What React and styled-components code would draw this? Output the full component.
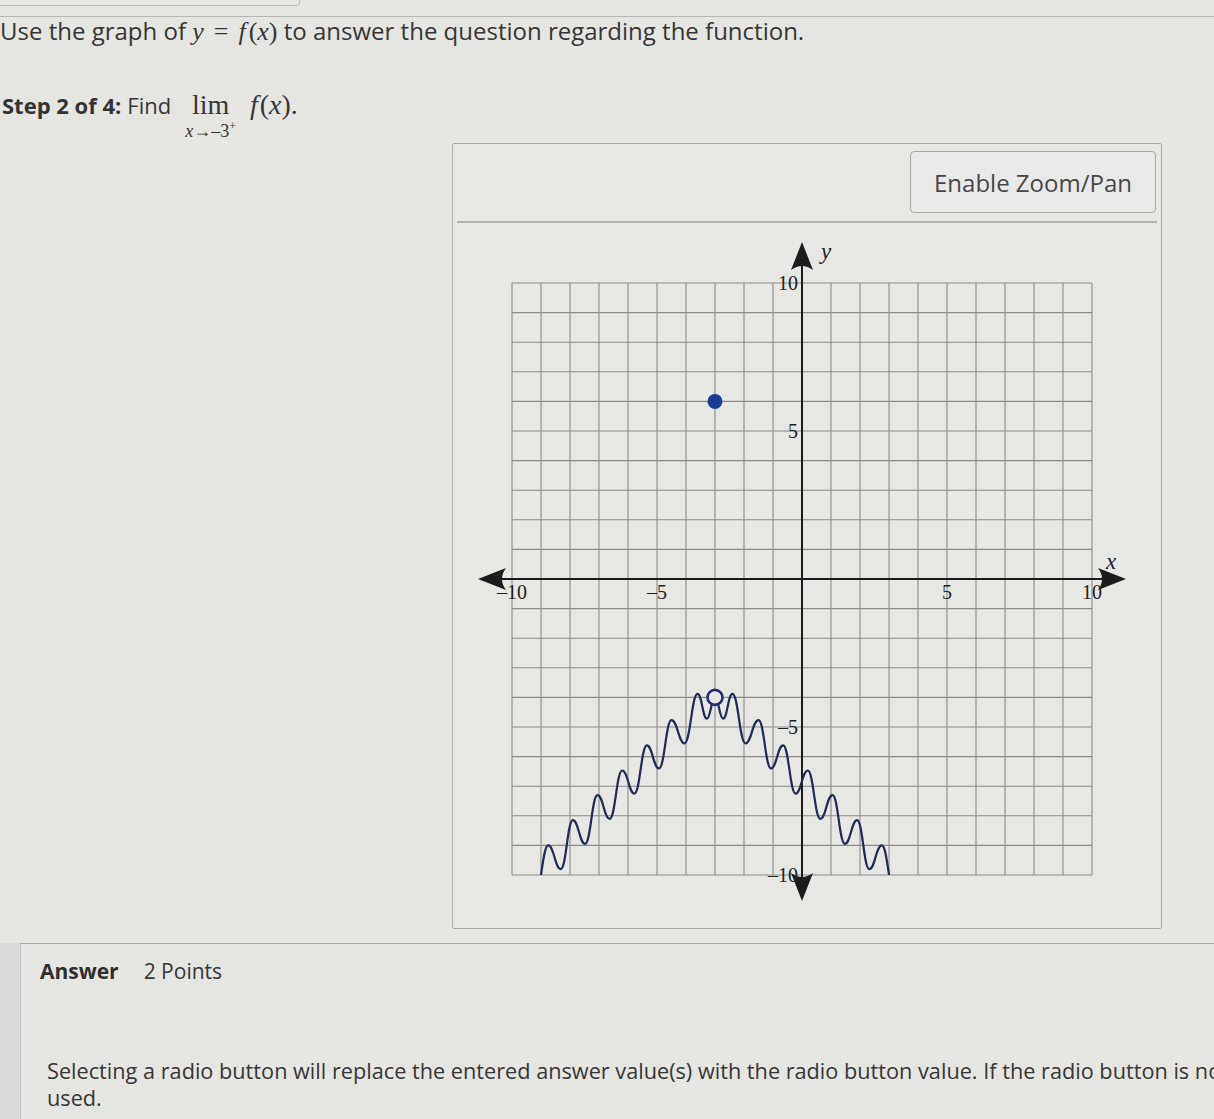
import React from 'react';
import styled, { createGlobalStyle } from 'styled-components';

const GlobalStyle = createGlobalStyle`
  html, body {
    margin: 0;
    padding: 0;
    background: #e5e5e2;
    overflow: hidden;
  }
  body {
    font-family: "Open Sans", "Liberation Sans", sans-serif;
    color: #363636;
  }
`;

const Page = styled.div`
  width: 1214px;
  height: 1119px;
  overflow: hidden;
  background: #e5e5e2;
`;

const TopTab = styled.div`
  box-sizing: border-box;
  width: 300px;
  height: 6px;
  border-right: 1px solid #b9b9b6;
  border-bottom: 1px solid #b9b9b6;
  border-bottom-right-radius: 4px;
`;

const TopRule = styled.div`
  margin-top: 10px;
  height: 1px;
  background: #b5b5b2;
`;

const Title = styled.div`
  font-size: 24px;
  line-height: 28px;
  white-space: nowrap;
`;

const MathVar = styled.span`
  font-family: "Liberation Serif", "Times New Roman", serif;
  font-style: ${({ upright }) => (upright ? 'normal' : 'italic')};
  font-size: ${({ size }) => size || '26px'};
  margin: ${({ space }) => space || '0'};
`;

const StepLine = styled.div`
  display: flex;
  align-items: baseline;
  height: 53px;
  margin-top: 44px;
  padding-left: 2px;
  font-size: 22px;
  line-height: 30px;
`;

const StepLabel = styled.span`
  font-weight: 700;
  color: #333;
  margin-right: 6px;
`;

const Limit = styled.span`
  display: inline-flex;
  flex-direction: column;
  align-items: center;
  margin: 0 14px 0 14px;
`;

const LimWord = styled.span`
  font-family: "Liberation Serif", "Times New Roman", serif;
  font-size: 28px;
  line-height: 30px;
`;

const LimSub = styled.span`
  margin-top: 1px;
  font-family: "Liberation Serif", "Times New Roman", serif;
  font-size: 18px;
  line-height: 20px;
  white-space: nowrap;

  sup {
    font-size: 12px;
    vertical-align: 7px;
    line-height: 0;
  }
`;

const GraphPanel = styled.div`
  box-sizing: border-box;
  margin-left: 452px;
  width: 710px;
  height: 786px;
  border: 1px solid #a9a9a6;
  border-radius: 2px;
  background: #e7e7e4;
`;

const PanelToolbar = styled.div`
  display: flex;
  justify-content: flex-end;
  align-items: flex-start;
  height: 79px;
  margin: 0 4px;
  padding: 7px 1px 0 0;
  box-sizing: border-box;
  border-bottom: 2px solid #b3b3b0;
`;

const ZoomButton = styled.button`
  width: 246px;
  height: 62px;
  border: 1px solid #a6a6a3;
  border-radius: 4px;
  background: #e9e9e7;
  font-family: "Open Sans", "Liberation Sans", sans-serif;
  font-size: 24px;
  color: #474747;
  padding: 0;
`;

const GraphSvg = styled.svg`
  display: block;
`;

const AnswerSection = styled.div`
  margin-top: 14px;
  margin-left: 20px;
  height: 300px;
  padding-left: 19px;
  border-top: 1px solid #a9a9a6;
  border-left: 1px solid #c3c4c3;
  background: #e5e5e2;
  box-shadow: -20px 0 0 #d9dbdb;
`;

const AnswerHeader = styled.div`
  display: flex;
  gap: 25px;
  padding-top: 13px;
  font-size: 21px;
  line-height: 28px;
`;

const AnswerLabel = styled.span`
  font-weight: 700;
  color: #2f2f2f;
`;

const Notice = styled.p`
  margin: 72px 0 0 7px;
  font-size: 21.7px;
  line-height: 27px;
  white-space: nowrap;
`;

// graph geometry (page pixels)
const OX = 802;
const OY = 580;
const UX = 29;
const UY = 29.6;
const px = (u) => OX + UX * u;
const py = (v) => OY - UY * v;

const GRID = { left: px(-10), right: px(10), top: py(10), bottom: py(-10) };

// local extrema of the wave, by distance from x = -3
const extrema = [
  [0, -4], [0.28, -4.72], [0.6, -3.88], [1.05, -5.55], [1.5, -4.77],
  [1.93, -6.4], [2.35, -5.62], [2.78, -7.25], [3.2, -6.47], [3.63, -8.1],
  [4.05, -7.3], [4.48, -8.95], [4.9, -8.15], [5.32, -9.8], [5.75, -9.0],
  [6.2, -10.65],
];

const buildCurve = () => {
  const pts = [
    ...extrema.slice(1).reverse().map(([d, v]) => [-3 - d, v]),
    [-3, -4],
    ...extrema.slice(1).map(([d, v]) => [-3 + d, v]),
  ].map(([u, v]) => [px(u), py(v)]);
  let d = `M${pts[0][0].toFixed(1)} ${pts[0][1].toFixed(1)}`;
  for (let i = 1; i < pts.length; i++) {
    const [ax, ay] = pts[i - 1];
    const [bx, by] = pts[i];
    const k = (bx - ax) * 0.45;
    d += ` C${(ax + k).toFixed(1)} ${ay.toFixed(1)} ${(bx - k).toFixed(1)} ${by.toFixed(1)} ${bx.toFixed(1)} ${by.toFixed(1)}`;
  }
  return d;
};

const curvePath = buildCurve();
const ticks = Array.from({ length: 21 }, (_, i) => i - 10);

const Graph = () => (
  <GraphSvg width="708" height="703" viewBox="453 224 708 703">
    <defs>
      <clipPath id="gridClip">
        <rect x={GRID.left} y={GRID.top} width={GRID.right - GRID.left} height={GRID.bottom - GRID.top} />
      </clipPath>
    </defs>
    <g stroke="#8a8a88" strokeWidth="1.1">
      {ticks.map((t) => (
        <line key={`v${t}`} x1={px(t)} y1={GRID.top} x2={px(t)} y2={GRID.bottom} />
      ))}
      {ticks.map((t) => (
        <line key={`h${t}`} x1={GRID.left} y1={py(t)} x2={GRID.right} y2={py(t)} />
      ))}
    </g>

    {/* axes */}
    <g stroke="#1c1c1c" strokeWidth="2">
      <line x1={482} y1={OY} x2={1122} y2={OY} />
      <line x1={OX} y1={247} x2={OX} y2={898} />
    </g>
    <g fill="#1c1c1c">
      <path d={`M478 ${OY} L506 ${OY - 11} Q498 ${OY} 506 ${OY + 11} Z`} />
      <path d={`M1126 ${OY} L1098 ${OY - 11} Q1106 ${OY} 1098 ${OY + 11} Z`} />
      <path d={`M${OX} 243 L${OX - 11} 271 Q${OX} 263 ${OX + 11} 271 Z`} />
      <path d={`M${OX} 902 L${OX - 11} 874 Q${OX} 882 ${OX + 11} 874 Z`} />
    </g>

    <g fontFamily='"Liberation Serif", "Times New Roman", serif' fontSize="20" fill="#222">
      <text x="821" y="260" fontStyle="italic" fontSize="23">y</text>
      <text x="1106" y="570" fontStyle="italic" fontSize="23">x</text>
      <text x={OX - 4} y={py(10) + 7} textAnchor="end">10</text>
      <text x={OX - 4} y={py(5) + 7} textAnchor="end">5</text>
      <text x={OX - 4} y={py(-5) + 7} textAnchor="end">–5</text>
      <text x={OX - 4} y={py(-10) + 7} textAnchor="end">–10</text>
      <text x={px(-10)} y={OY + 20} textAnchor="middle">–10</text>
      <text x={px(-5)} y={OY + 20} textAnchor="middle">–5</text>
      <text x={px(5)} y={OY + 20} textAnchor="middle">5</text>
      <text x={px(10)} y={OY + 20} textAnchor="middle">10</text>
    </g>

    <path d={curvePath} fill="none" stroke="#1f2a55" strokeWidth="2.2" clipPath="url(#gridClip)" />
    <circle cx={px(-3)} cy={py(-4)} r="7.5" fill="#e7e7e4" stroke="#1f2f72" strokeWidth="2.6" />
    <circle cx={px(-3)} cy={py(6)} r="7.5" fill="#1d3c96" />
  </GraphSvg>
);

export default function App() {
  return (
    <Page>
      <GlobalStyle />
      <TopTab />
      <TopRule />
      <Title>
        Use the graph of <MathVar>y</MathVar>
        <MathVar upright space="0 10px">=</MathVar>
        <MathVar space="0 3px 0 0">f</MathVar>
        <MathVar upright>(</MathVar><MathVar>x</MathVar><MathVar upright>)</MathVar> to answer the question regarding the function.
      </Title>
      <StepLine>
        <StepLabel>Step 2 of 4:</StepLabel>
        <span>Find</span>
        <Limit>
          <LimWord>lim</LimWord>
          <LimSub>
            <i>x</i>→–3<sup>+</sup>
          </LimSub>
        </Limit>
        <MathVar size="28px" space="0 2px 0 0">f</MathVar>
        <MathVar size="28px" upright>(</MathVar>
        <MathVar size="28px">x</MathVar>
        <MathVar size="28px" upright>).</MathVar>
      </StepLine>
      <GraphPanel>
        <PanelToolbar>
          <ZoomButton type="button">Enable Zoom/Pan</ZoomButton>
        </PanelToolbar>
        <Graph />
      </GraphPanel>
      <AnswerSection>
        <AnswerHeader>
          <AnswerLabel>Answer</AnswerLabel>
          <span>2 Points</span>
        </AnswerHeader>
        <Notice>
          Selecting a radio button will replace the entered answer value(s) with the radio button value. If the radio button is not
          <br />
          used.
        </Notice>
      </AnswerSection>
    </Page>
  );
}
